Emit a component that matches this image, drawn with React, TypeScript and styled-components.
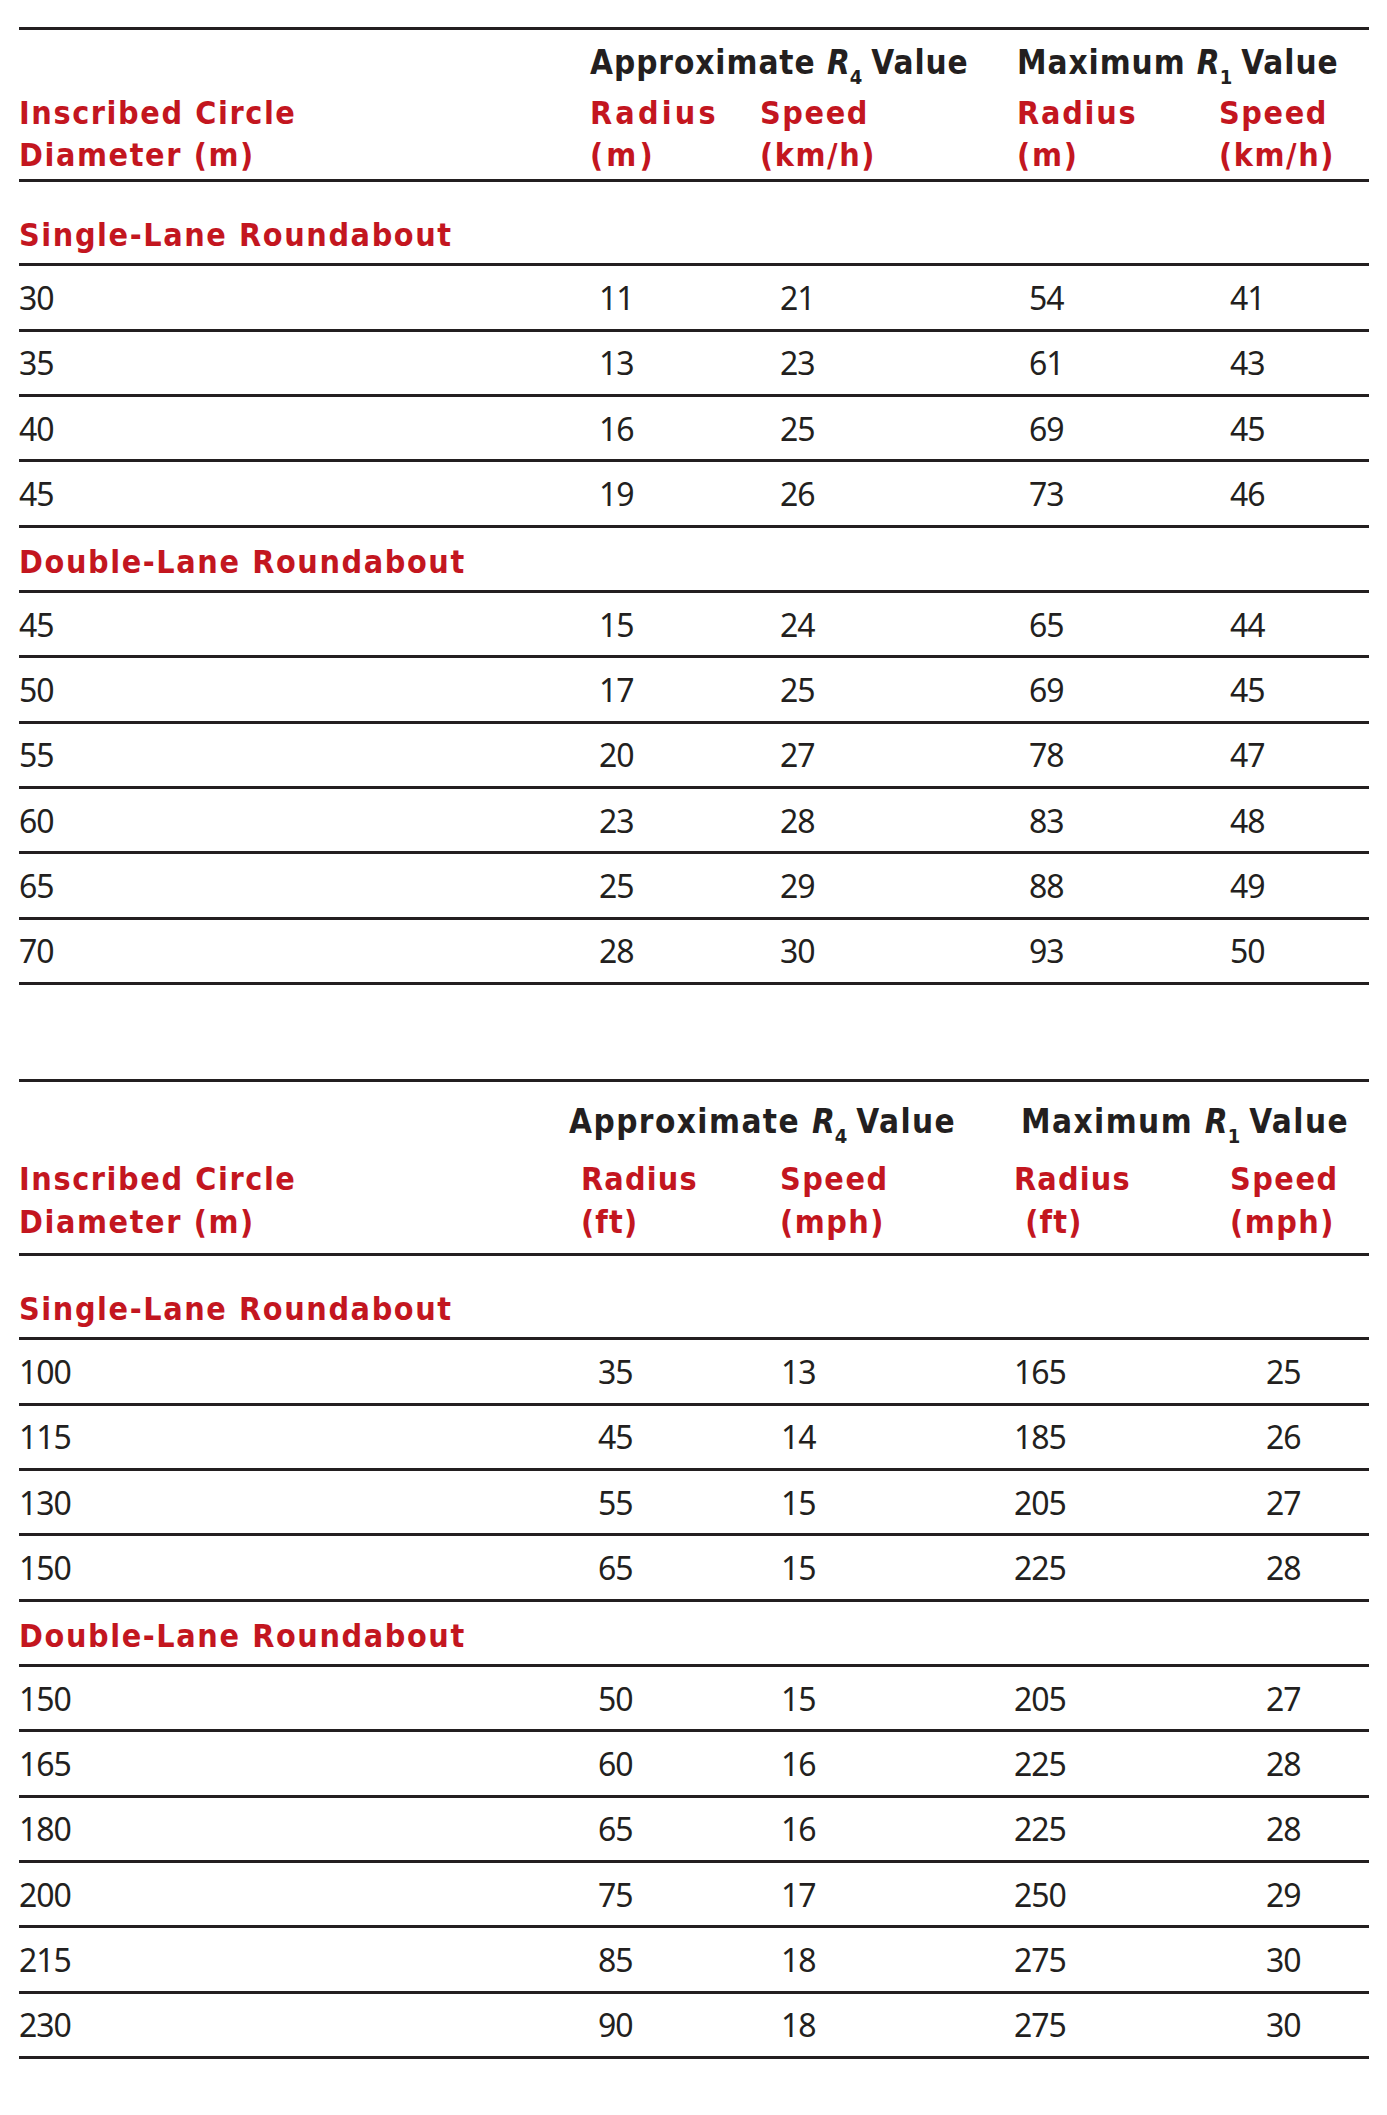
import styled, { createGlobalStyle } from 'styled-components'

const INK = '#231f20'
const RED = '#c3161f'
const HEAD_FONT = '"DejaVu Sans Condensed", "DejaVu Sans", sans-serif'
const NUM_FONT = '"Noto Sans", "Open Sans", sans-serif'
const ROW_HEIGHT = 65.35

type Num = number | string
type RowData = [Num, Num, Num, Num, Num]

interface TableConfig {
  cols: string
  groupOffsets: [number, number]
  titleSpacing: number
  numOffsets: number[]
  padTop: number
  gap: number
  padBottom: number
  lineHeight: number
  subs: { text: string; spacing: number }[]
  single: RowData[]
  double: RowData[]
  doubleOffset: number
}

const GlobalStyle = createGlobalStyle`
  html, body {
    margin: 0;
    padding: 0;
    background: #ffffff;
  }
`

const Page = styled.main`
  width: 1387px;
  box-sizing: border-box;
  padding: 27px 18px 40px 19px;
  display: flex;
  flex-direction: column;
  gap: 94px;
`

const Table = styled.section`
  border-top: 3px solid ${INK};
`

const Header = styled.div<{ $cols: string; $padTop: number; $gap: number; $padBottom: number }>`
  display: grid;
  grid-template-columns: ${({ $cols }) => $cols};
  grid-template-rows: 36px auto;
  row-gap: ${({ $gap }) => $gap}px;
  padding: ${({ $padTop }) => $padTop}px 0 ${({ $padBottom }) => $padBottom}px;
  border-bottom: 3px solid ${INK};
`

const GroupTitle = styled.div<{ $col: number; $offset: number; $spacing: number }>`
  grid-row: 1;
  grid-column: ${({ $col }) => $col} / span 2;
  margin-left: ${({ $offset }) => $offset}px;
  font-family: ${HEAD_FONT};
  font-weight: 700;
  font-size: 33px;
  line-height: 36px;
  letter-spacing: ${({ $spacing }) => $spacing}px;
  color: ${INK};
  white-space: nowrap;
`

const Var = styled.i`
  font-style: italic;
  letter-spacing: 0;
`

const Sub = styled.sub`
  font-size: 20px;
  line-height: 0;
  vertical-align: -10px;
  margin-right: 9px;
  letter-spacing: 0;
`

const RedLabel = styled.div<{ $lineHeight: number; $spacing: number }>`
  grid-row: 2;
  align-self: end;
  font-family: ${HEAD_FONT};
  font-weight: 700;
  font-size: 32px;
  line-height: ${({ $lineHeight }) => $lineHeight}px;
  letter-spacing: ${({ $spacing }) => $spacing}px;
  color: ${RED};
  white-space: pre;
`

const Row = styled.div<{ $cols: string }>`
  display: grid;
  grid-template-columns: ${({ $cols }) => $cols};
  align-items: center;
  height: ${ROW_HEIGHT}px;
  box-sizing: border-box;
  border-bottom: 3px solid ${INK};
`

const Cell = styled.div<{ $offset: number }>`
  padding-left: ${({ $offset }) => $offset}px;
  font-family: ${NUM_FONT};
  font-size: 32px;
  line-height: 33px;
  letter-spacing: -1px;
  color: ${INK};
`

const SectionRow = styled.div<{ $first?: boolean; $offset: number }>`
  height: ${({ $first }) => ($first ? ROW_HEIGHT + 18.6 : ROW_HEIGHT)}px;
  box-sizing: border-box;
  padding-top: ${({ $first }) => ($first ? 31.9 : 13.3)}px;
  padding-left: ${({ $offset }) => $offset}px;
  border-bottom: 3px solid ${INK};
  font-family: ${HEAD_FONT};
  font-weight: 700;
  font-size: 32px;
  line-height: 42px;
  letter-spacing: 1.6px;
  color: ${RED};
`

const metric: TableConfig = {
  cols: '571px 170px 257px 202px 150px',
  groupOffsets: [0, 0],
  titleSpacing: 0.95,
  numOffsets: [0, 9, 20, 12, 11],
  padTop: 15.3,
  gap: 11,
  padBottom: 3,
  lineHeight: 42,
  subs: [
    { text: 'Radius\n(m)', spacing: 3.2 },
    { text: 'Speed\n(km/h)', spacing: 1.6 },
    { text: 'Radius\n(m)', spacing: 1.8 },
    { text: 'Speed\n(km/h)', spacing: 1.6 },
  ],
  single: [
    [30, 11, 21, 54, 41],
    [35, 13, 23, 61, 43],
    [40, 16, 25, 69, 45],
    [45, 19, 26, 73, 46],
  ],
  double: [
    [45, 15, 24, 65, 44],
    [50, 17, 25, 69, 45],
    [55, 20, 27, 78, 47],
    [60, 23, 28, 83, 48],
    [65, 25, 29, 88, 49],
    [70, 28, 30, 93, 50],
  ],
  doubleOffset: 0,
}

const imperial: TableConfig = {
  cols: '562px 199px 234px 216px 139px',
  groupOffsets: [-12, 7],
  titleSpacing: 1.45,
  numOffsets: [0, 17, 1, -2, 36],
  padTop: 22.1,
  gap: 17.8,
  padBottom: 9.4,
  lineHeight: 43,
  subs: [
    { text: 'Radius\n(ft)', spacing: 1.2 },
    { text: 'Speed\n(mph)', spacing: 1.5 },
    { text: 'Radius\n (ft)', spacing: 1.2 },
    { text: 'Speed\n(mph)', spacing: 1.5 },
  ],
  single: [
    [100, 35, 13, 165, 25],
    [115, 45, 14, 185, 26],
    [130, 55, 15, 205, 27],
    [150, 65, 15, 225, 28],
  ],
  double: [
    [150, 50, 15, 205, 27],
    [165, 60, 16, 225, 28],
    [180, 65, 16, 225, 28],
    [200, 75, 17, 250, 29],
    [215, 85, 18, 275, 30],
    [230, 90, 18, 275, 30],
  ],
  doubleOffset: -3,
}

function DataRow({ data, config }: { data: RowData; config: TableConfig }) {
  return (
    <Row $cols={config.cols}>
      {data.map((value, i) => (
        <Cell key={i} $offset={config.numOffsets[i]}>
          {value}
        </Cell>
      ))}
    </Row>
  )
}

function SpeedTable({ config }: { config: TableConfig }) {
  return (
    <Table>
      <Header $cols={config.cols} $padTop={config.padTop} $gap={config.gap} $padBottom={config.padBottom}>
        <GroupTitle $col={2} $offset={config.groupOffsets[0]} $spacing={config.titleSpacing}>
          Approximate <Var>R</Var>
          <Sub>4</Sub>Value
        </GroupTitle>
        <GroupTitle $col={4} $offset={config.groupOffsets[1]} $spacing={config.titleSpacing}>
          Maximum <Var>R</Var>
          <Sub>1</Sub>Value
        </GroupTitle>
        <RedLabel $lineHeight={config.lineHeight} $spacing={1.6}>
          {'Inscribed Circle\nDiameter (m)'}
        </RedLabel>
        {config.subs.map((sub, i) => (
          <RedLabel key={i} $lineHeight={config.lineHeight} $spacing={sub.spacing}>
            {sub.text}
          </RedLabel>
        ))}
      </Header>
      <SectionRow $first $offset={0}>
        Single-Lane Roundabout
      </SectionRow>
      {config.single.map((row, i) => (
        <DataRow key={`s${i}`} data={row} config={config} />
      ))}
      <SectionRow $offset={config.doubleOffset}>Double-Lane Roundabout</SectionRow>
      {config.double.map((row, i) => (
        <DataRow key={`d${i}`} data={row} config={config} />
      ))}
    </Table>
  )
}

export default function App() {
  return (
    <>
      <GlobalStyle />
      <Page>
        <SpeedTable config={metric} />
        <SpeedTable config={imperial} />
      </Page>
    </>
  )
}
